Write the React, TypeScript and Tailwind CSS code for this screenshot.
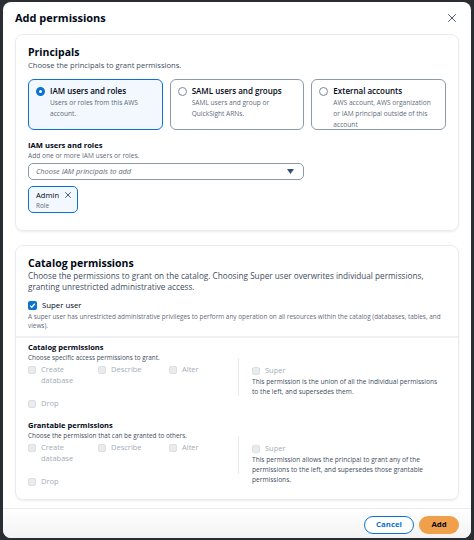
import { X } from "lucide-react";

const font = { fontFamily: '"Open Sans", "Liberation Sans", sans-serif' };

function Radio({ checked }: { checked?: boolean }) {
  return checked ? (
    <span className="mt-[2px] w-[9px] h-[9px] rounded-full border-[3px] border-[#0972d3] bg-white shrink-0" />
  ) : (
    <span className="mt-[2px] w-[9px] h-[9px] rounded-full border border-[#7d8998] bg-white shrink-0" />
  );
}

function Tile({ title, desc, checked }: { title: string; desc: string; checked?: boolean }) {
  return (
    <div
      className={`flex-1 h-[51px] rounded-[6px] px-[7px] pt-[5px] flex gap-[5px] ${
        checked ? "border border-[#0972d3] bg-[#f2f8fd]" : "border border-[#8d99a8] bg-white"
      }`}
    >
      <Radio checked={checked} />
      <div>
        <div className="text-[8px] leading-[12px] font-semibold text-[#000716]">{title}</div>
        <div className="text-[6.6px] leading-[11px] text-[#5f6b7a]">{desc}</div>
      </div>
    </div>
  );
}

function DisabledBox({ label }: { label: string }) {
  return (
    <div className="flex gap-[5px] items-start">
      <span className="mt-[2px] w-[8px] h-[8px] rounded-[2px] bg-[#e9ebed] border border-[#dcdfe3] shrink-0" />
      <span className="text-[7.5px] leading-[11px] text-[#a4adb8] w-[44px]">{label}</span>
    </div>
  );
}

function PermGroup({ title, sub, superDesc }: { title: string; sub: string; superDesc: string }) {
  return (
    <div>
      <div className="text-[7.5px] leading-[11px] font-bold text-[#000716]">{title}</div>
      <div className="text-[6.4px] leading-[10px] text-[#414d5c]">{sub}</div>
      <div className="flex mt-[1px]">
        <div className="w-[210px]">
          <div className="flex">
            <div className="w-[70px]"><DisabledBox label="Create database" /></div>
            <div className="w-[71px]"><DisabledBox label="Describe" /></div>
            <div className="w-[69px]"><DisabledBox label="Alter" /></div>
          </div>
          <div className="mt-[12px]"><DisabledBox label="Drop" /></div>
        </div>
        <div className="border-l border-[#e9ebed] pl-[13px] mt-[-6px] pt-[7px] h-[38px] flex-1">
          <DisabledBox label="Super" />
          <div className="text-[6.6px] leading-[10px] text-[#414d5c] mt-[1px] pr-[8px]">{superDesc}</div>
        </div>
      </div>
    </div>
  );
}

export default function App() {
  return (
    <div className="w-[474px] h-[540px] bg-[#2a2e33] pt-[2px] px-[3px] overflow-hidden" style={font}>
      <div className="h-[536px] bg-white rounded-[8px] flex flex-col overflow-hidden">
        {/* header */}
        <div className="h-[32px] flex items-center justify-between px-[12px] shrink-0">
          <h1 className="text-[11px] font-bold text-[#000716]">Add permissions</h1>
          <X className="w-[14px] h-[14px] text-[#414d5c]" strokeWidth={1.6} />
        </div>

        <div className="flex-1 px-[12px] flex flex-col gap-[14px]">
          {/* Principals */}
          <div className="rounded-[8px] border border-[#e9ebed] shadow-[0_1px_2px_rgba(0,7,22,0.08)] px-[12px] pt-[10px] pb-[17px]">
            <h2 className="text-[10.5px] leading-[14px] font-bold text-[#000716]">Principals</h2>
            <p className="text-[7.6px] leading-[12px] text-[#414d5c]">Choose the principals to grant permissions.</p>
            <div className="flex gap-[7px] mt-[8px]">
              <Tile checked title="IAM users and roles" desc="Users or roles from this AWS account." />
              <Tile title="SAML users and groups" desc="SAML users and group or QuickSight ARNs." />
              <Tile title="External accounts" desc="AWS account, AWS organization or IAM principal outside of this account" />
            </div>
            <div className="mt-[9px] text-[7.6px] leading-[12px] font-bold text-[#000716]">IAM users and roles</div>
            <div className="text-[6.6px] leading-[10px] text-[#5f6b7a]">Add one or more IAM users or roles.</div>
            <div className="mt-[2px] w-[276px] h-[17px] rounded-[5px] border border-[#8d99a8] flex items-center justify-between pl-[7px] pr-[9px]">
              <span className="text-[7.4px] italic text-[#5f6b7a]">Choose IAM principals to add</span>
              <svg width="7" height="5" viewBox="0 0 7 5">
                <path d="M0 0h7L3.5 5z" fill="#354e77" />
              </svg>
            </div>
            <div className="mt-[6px] w-[50px] h-[27px] rounded-[5px] border border-[#0972d3] bg-[#f2f8fd] pl-[7px] pt-[2px]">
              <div className="flex items-center gap-[4px]">
                <span className="text-[7.6px] leading-[12px] text-[#000716]">Admin</span>
                <X className="w-[10px] h-[10px] text-[#354e77]" strokeWidth={2.2} />
              </div>
              <div className="text-[6.4px] leading-[9px] text-[#5f6b7a]">Role</div>
            </div>
          </div>

          {/* Catalog permissions */}
          <div className="rounded-[8px] border border-[#e9ebed] shadow-[0_1px_2px_rgba(0,7,22,0.08)] h-[255px] overflow-hidden">
            <div className="px-[12px] pt-[10px] pb-[6px]">
              <h2 className="text-[10.5px] leading-[14px] font-bold text-[#000716]">Catalog permissions</h2>
              <p className="text-[8.2px] leading-[11px] text-[#414d5c]">
                Choose the permissions to grant on the catalog. Choosing Super user overwrites individual permissions, granting unrestricted administrative access.
              </p>
              <div className="flex items-center gap-[5px] mt-[7px]">
                <span className="w-[9px] h-[9px] rounded-[2px] bg-[#0972d3] flex items-center justify-center">
                  <svg width="7" height="7" viewBox="0 0 7 7">
                    <path d="M1.2 3.6l1.6 1.6 3-3.4" fill="none" stroke="white" strokeWidth="1.3" />
                  </svg>
                </span>
                <span className="text-[7.8px] leading-[12px] text-[#000716]">Super user</span>
              </div>
              <p className="text-[6.4px] leading-[9px] text-[#5f6b7a] mt-[1px]">
                A super user has unrestricted administrative privileges to perform any operation on all resources within the catalog (databases, tables, and views).
              </p>
            </div>
            <div className="border-t-[2px] border-[#eef0f2] px-[12px] pt-[4px] flex flex-col gap-[11px]">
              <PermGroup
                title="Catalog permissions"
                sub="Choose specific access permissions to grant."
                superDesc="This permission is the union of all the individual permissions to the left, and supersedes them."
              />
              <PermGroup
                title="Grantable permissions"
                sub="Choose the permission that can be granted to others."
                superDesc="This permission allows the principal to grant any of the permissions to the left, and supersedes those grantable permissions."
              />
            </div>
          </div>
        </div>

        {/* footer */}
        <div className="h-[30px] border-t border-[#e9ebed] bg-gradient-to-b from-white to-[#f3f3f4] flex items-start pt-[7px] justify-end gap-[5px] px-[12px] shrink-0">
          <button className="h-[18px] w-[50px] rounded-full border border-[#0972d3] bg-white text-[7.8px] font-bold text-[#0972d3]">
            Cancel
          </button>
          <button className="h-[18px] w-[40px] rounded-full bg-[#f0a04b] text-[7.8px] font-bold text-[#000716]">
            Add
          </button>
        </div>
      </div>
    </div>
  );
}
